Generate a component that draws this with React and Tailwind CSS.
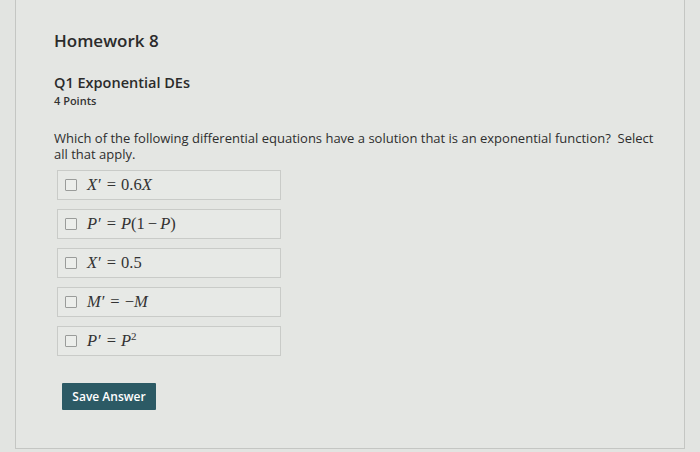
import React from 'react';

const Eq = () => <span className="mx-[5px]">=</span>;
const Prime = () => <span className="ml-[1px]">′</span>;

const options = [
  { id: 1, math: <><i>X</i><Prime /><Eq />0.6<i>X</i></> },
  { id: 2, math: <><i>P</i><Prime /><Eq /><i>P</i>(1<span className="mx-[3px]">−</span><i>P</i>)</> },
  { id: 3, math: <><i>X</i><Prime /><Eq />0.5</> },
  { id: 4, math: <><i>M</i><Prime /><Eq />−<i>M</i></> },
  { id: 5, math: <><i>P</i><Prime /><Eq /><i>P</i><sup className="text-[11px]">2</sup></> },
];

const Option = ({ children }) => (
  <label className="flex items-center w-[224px] h-[30px] border border-[#c9cbc8] bg-[#e7e9e6] pl-[7px]">
    <span className="w-[12px] h-[12px] border border-[#9a9c9a] bg-[#eceeeb] rounded-[1px] mr-[10px]" />
    <span className="text-[16.5px] text-[#333] leading-none" style={{ fontFamily: '"Liberation Serif", "DejaVu Serif", serif' }}>
      {children}
    </span>
  </label>
);

export default function App() {
  return (
    <div className="w-[700px] h-[452px] bg-[#e2e4e1] overflow-hidden" style={{ fontFamily: '"Open Sans", "Noto Sans", sans-serif' }}>
      <div className="ml-[15px] mr-[15px] h-[449px] border-l border-r border-b border-[#c4c6c3] bg-[#e4e6e3] pl-[38px] pt-[29px]">
        <h1 className="text-[17px] font-semibold text-[#2b2b2b] leading-[24px]">Homework 8</h1>

        <h2 className="mt-[20px] text-[14.5px] font-semibold text-[#2b2b2b] leading-[20px]">Q1 Exponential DEs</h2>
        <div className="text-[11px] font-semibold text-[#333] leading-[15px]">4 Points</div>

        <p className="mt-[22px] w-[610px] text-[13px] text-[#2e2e2e] leading-[16px]">
          Which of the following differential equations have a solution that is an exponential function?&nbsp; Select all that apply.
        </p>

        <div className="mt-[8px] ml-[3px] flex flex-col gap-[9px]">
          {options.map(o => (
            <Option key={o.id}>{o.math}</Option>
          ))}
        </div>

        <button className="mt-[27px] ml-[8px] w-[94px] h-[27px] bg-[#2c5a65] text-white text-[12px] font-semibold rounded-[1px]">
          Save Answer
        </button>
      </div>
    </div>
  );
}
